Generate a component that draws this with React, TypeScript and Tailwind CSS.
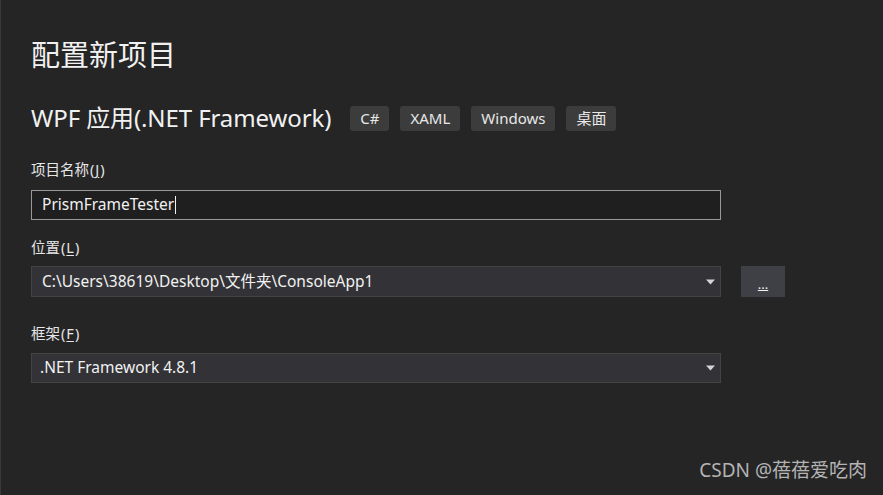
const FONT = {
  fontFamily:
    '"Noto Sans", "Noto Sans CJK SC", "Microsoft YaHei", sans-serif',
};

const TAGS = ["C#", "XAML", "Windows", "桌面"];

function Caret() {
  return (
    <svg width="9" height="6" viewBox="0 0 9 6" className="shrink-0">
      <path d="M0 0.5h9L4.5 5.5z" fill="#d4d4d4" />
    </svg>
  );
}

function Label({ text, hotkey }: { text: string; hotkey: string }) {
  return (
    <div className="text-[14.5px] leading-[20px] text-[#e6e6e6]">
      {text}
      <span className="px-px">(</span>
      <span className="underline underline-offset-2">{hotkey}</span>
      <span className="px-px">)</span>
    </div>
  );
}

export default function App() {
  return (
    <div
      className="w-[883px] h-[495px] bg-[#252526] border-l border-[#3a3a3a] relative overflow-hidden"
      style={FONT}
    >
      <div className="pl-[30px] pt-[36px] flex flex-col">
        {/* Page title */}
        <h1 className="text-[29px] leading-[38px] text-[#f1f1f1]">
          配置新项目
        </h1>

        {/* Template name + tags */}
        <div className="mt-[29px] flex items-center">
          <span className="text-[24px] leading-[30px] text-[#f1f1f1] tracking-[-0.1px]">
            WPF 应用(.NET Framework)
          </span>
          <div className="ml-[19px] flex gap-[11px]">
            {TAGS.map((t) => (
              <span
                key={t}
                className="h-[25px] px-[10px] flex items-center rounded-[3px] bg-[#3c3c3c] text-[15px] text-[#e8e8e8]"
              >
                {t}
              </span>
            ))}
          </div>
        </div>

        {/* Project name */}
        <div className="mt-[26px]">
          <Label text="项目名称" hotkey="J" />
        </div>
        <div className="mt-[11px] w-[690px] h-[30px] border border-[#999999] bg-[#1f1f1f] flex items-center pl-[10px]">
          <span className="text-[15.5px] text-[#f1f1f1]">PrismFrameTester</span>
          <span className="w-px h-[18px] bg-[#f1f1f1] ml-px" />
        </div>

        {/* Location */}
        <div className="mt-[17px]">
          <Label text="位置" hotkey="L" />
        </div>
        <div className="mt-[9px] flex items-center gap-[20px]">
          <div className="w-[690px] h-[31px] border border-[#434346] bg-[#333337] flex items-center justify-between pl-[10px] pr-[5px]">
            <span className="text-[15.5px] text-[#f1f1f1]">
              C:\Users\38619\Desktop\文件夹\ConsoleApp1
            </span>
            <Caret />
          </div>
          <div className="w-[44px] h-[31px] bg-[#3f3f46] flex items-center justify-center text-[13px] text-[#f1f1f1]">
            <span className="underline underline-offset-1 leading-none pt-[6px]">...</span>
          </div>
        </div>

        {/* Framework */}
        <div className="mt-[26px]">
          <Label text="框架" hotkey="F" />
        </div>
        <div className="mt-[10px] w-[690px] h-[30px] border border-[#434346] bg-[#333337] flex items-center justify-between pl-[8px] pr-[5px]">
          <span className="text-[15.5px] text-[#f1f1f1]">.NET Framework 4.8.1</span>
          <Caret />
        </div>
      </div>

      <div className="absolute right-[16px] bottom-[13px] text-[19px] leading-[24px] text-[#b4b4b4]">
        CSDN @蓓蓓爱吃肉
      </div>
    </div>
  );
}
